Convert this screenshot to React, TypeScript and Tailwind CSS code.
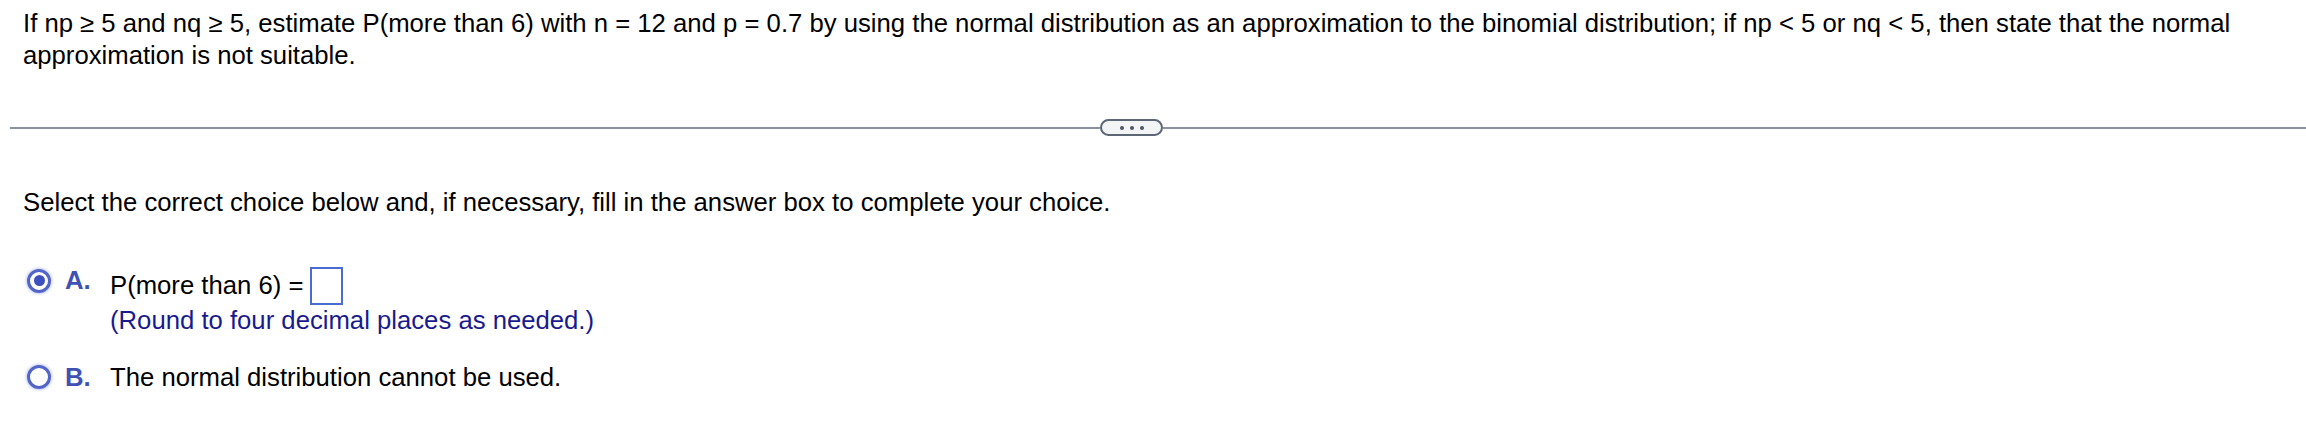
function Radio({ checked }: { checked?: boolean }) {
  return (
    <span className="flex h-[24px] w-[24px] shrink-0 items-center justify-center rounded-full border-[3px] border-[#5266c8] bg-white shadow-[0_0_3px_1px_#c3cbef]">
      {checked && <span className="h-[11px] w-[11px] rounded-full bg-[#3d50c0]" />}
    </span>
  );
}

export default function App() {
  return (
    <div className="h-[430px] w-full bg-white font-['Liberation_Sans',Arial,sans-serif] text-[25.7px] leading-[28.5px] text-black">
      <p className="pl-[23px] pt-[7px] leading-[32px]">
        If np ≥ 5 and nq ≥ 5, estimate P(more than 6) with n = 12 and p = 0.7 by using the normal
        distribution as an approximation to the binomial distribution; if np &lt; 5 or nq &lt; 5, then
        state that the normal
        <br />
        approximation is not suitable.
      </p>

      {/* divider with the collapse button */}
      <div className="ml-[10px] mt-[48px] flex items-center">
        <div className="h-[2px] w-[1090px] bg-[#8a91a0]" />
        <button className="flex h-[17px] w-[63px] shrink-0 items-center justify-center gap-[6px] rounded-full border-2 border-[#5d6675] bg-[#f3f4f6]">
          <span className="h-[4px] w-[4px] rounded-full bg-[#4b5563]" />
          <span className="h-[4px] w-[4px] rounded-full bg-[#4b5563]" />
          <span className="h-[4px] w-[4px] rounded-full bg-[#4b5563]" />
        </button>
        <div className="h-[2px] flex-1 bg-[#8a91a0]" />
      </div>

      <p className="mt-[52px] pl-[23px]">
        Select the correct choice below and, if necessary, fill in the answer box to complete your choice.
      </p>

      {/* option A */}
      <div className="mt-[50px] flex items-start pl-[27px]">
        <div className="mt-[2px]">
          <Radio checked />
        </div>
        <span className="ml-[14px] mt-[-1px] w-[45px] font-bold text-[#4051b5]">A.</span>
        <div>
          <div className="flex items-center gap-[7px]">
            <span>P(more than 6) =</span>
            <span className="h-[38px] w-[33px] border-2 border-[#4a6bd0] bg-white" />
          </div>
          <p className="mt-[1px] text-[#1a1a8f]">(Round to four decimal places as needed.)</p>
        </div>
      </div>

      {/* option B */}
      <div className="mt-[29px] flex items-start pl-[27px]">
        <div className="mt-[2px]">
          <Radio />
        </div>
        <span className="ml-[14px] w-[45px] font-bold text-[#4051b5]">B.</span>
        <span>The normal distribution cannot be used.</span>
      </div>
    </div>
  );
}
